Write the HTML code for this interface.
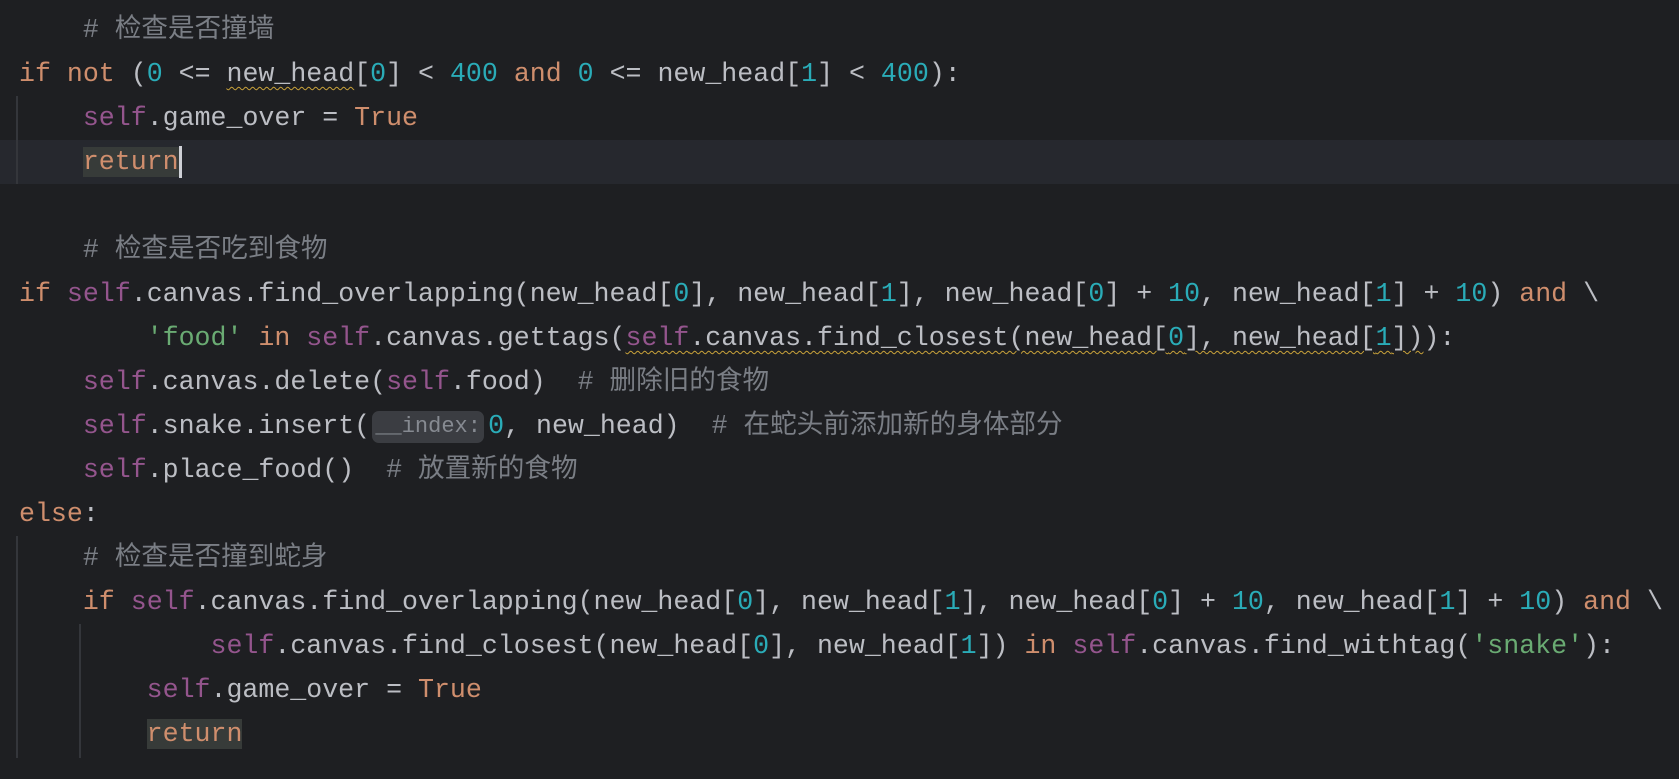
<!DOCTYPE html>
<html><head><meta charset="utf-8"><style>
body{margin:0;width:1679px;height:779px;background:#1e1f22;overflow:hidden;position:relative;
font-family:"Liberation Mono","Noto Sans CJK SC",monospace;font-size:26.6px;color:#bcbec4}
.l{position:absolute;left:19px;height:44px;line-height:44px;white-space:pre}
.k{color:#cf8e6d}.s{color:#94558d}.n{color:#2aacb8}.st{color:#6aab73}.c{color:#7a7e85}
.cur{position:absolute;left:0;top:140px;width:1679px;height:44px;background:#26282e}
.g{position:absolute;width:2px;background:#34363b}
.w{text-decoration:underline wavy #c9a23a;text-decoration-thickness:1px;text-underline-offset:5px}
.hint{display:inline-block;box-sizing:border-box;width:112px;text-align:center;background:#3b3d42;color:#868a91;border-radius:7px;font-size:22px;line-height:32px;height:32px;margin:0 4px 0 2px;vertical-align:1px}
.rb{background:#373b39}
</style></head><body>
<div class="cur"></div>
<div class="g" style="left:16px;top:96px;height:88px"></div>
<div class="g" style="left:16px;top:536px;height:222px"></div>
<div class="g" style="left:79px;top:624px;height:134px"></div>
<div class="l" style="top:8px">    <span class="c"># 检查是否撞墙</span></div>
<div class="l" style="top:52px"><span class="k">if not</span> (<span class="n">0</span> &lt;= <span class="w">new_head</span>[<span class="n">0</span>] &lt; <span class="n">400</span> <span class="k">and</span> <span class="n">0</span> &lt;= new_head[<span class="n">1</span>] &lt; <span class="n">400</span>):</div>
<div class="l" style="top:96px">    <span class="s">self</span>.game_over = <span class="k">True</span></div>
<div class="l" style="top:140px">    <span class="k rb">return</span><span style="display:inline-block;width:3px;height:32px;background:#ced0d6;vertical-align:middle"></span></div>
<div class="l" style="top:228px">    <span class="c"># 检查是否吃到食物</span></div>
<div class="l" style="top:272px"><span class="k">if</span> <span class="s">self</span>.canvas.find_overlapping(new_head[<span class="n">0</span>], new_head[<span class="n">1</span>], new_head[<span class="n">0</span>] + <span class="n">10</span>, new_head[<span class="n">1</span>] + <span class="n">10</span>) <span class="k">and</span> \</div>
<div class="l" style="top:316px">        <span class="st">'food'</span> <span class="k">in</span> <span class="s">self</span>.canvas.gettags(<span class="w"><span class="s">self</span>.canvas.find_closest(new_head[<span class="n">0</span>], new_head[<span class="n">1</span>])</span>):</div>
<div class="l" style="top:360px">    <span class="s">self</span>.canvas.delete(<span class="s">self</span>.food)  <span class="c"># 删除旧的食物</span></div>
<div class="l" style="top:404px">    <span class="s">self</span>.snake.insert(<span class="hint">__index:</span><span class="n">0</span>, new_head)  <span class="c"># 在蛇头前添加新的身体部分</span></div>
<div class="l" style="top:448px">    <span class="s">self</span>.place_food()  <span class="c"># 放置新的食物</span></div>
<div class="l" style="top:492px"><span class="k">else</span>:</div>
<div class="l" style="top:536px">    <span class="c"># 检查是否撞到蛇身</span></div>
<div class="l" style="top:580px">    <span class="k">if</span> <span class="s">self</span>.canvas.find_overlapping(new_head[<span class="n">0</span>], new_head[<span class="n">1</span>], new_head[<span class="n">0</span>] + <span class="n">10</span>, new_head[<span class="n">1</span>] + <span class="n">10</span>) <span class="k">and</span> \</div>
<div class="l" style="top:624px">            <span class="s">self</span>.canvas.find_closest(new_head[<span class="n">0</span>], new_head[<span class="n">1</span>]) <span class="k">in</span> <span class="s">self</span>.canvas.find_withtag(<span class="st">'snake'</span>):</div>
<div class="l" style="top:668px">        <span class="s">self</span>.game_over = <span class="k">True</span></div>
<div class="l" style="top:712px">        <span class="k rb">return</span></div>
</body></html>
